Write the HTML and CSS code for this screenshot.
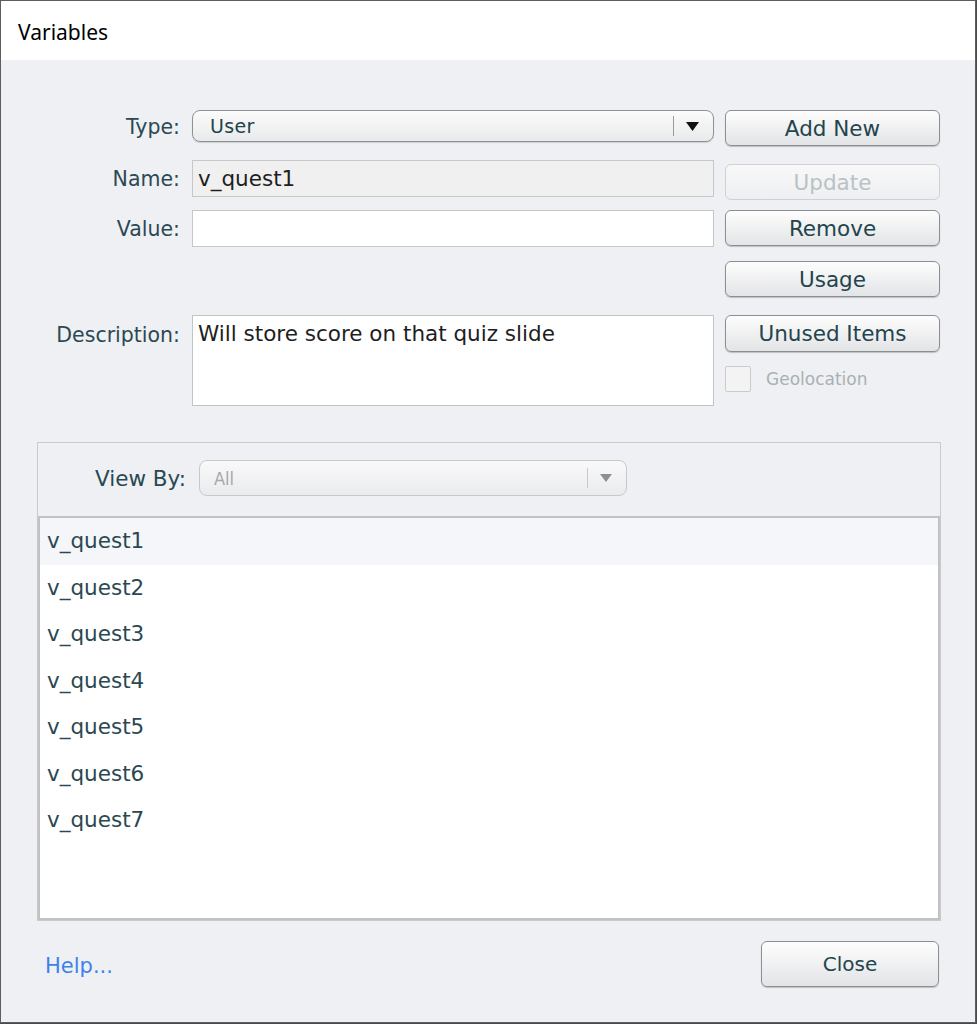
FILE: index.html
```html
<!DOCTYPE html>
<html>
<head>
<meta charset="utf-8">
<title>Variables</title>
<link rel="stylesheet" href="styles.css">
</head>
<body>
<div class="window">
  <div class="titlebar">Variables</div>
  <div class="content">
    <div class="form">
      <div class="label h32">Type:</div>
      <div class="select">
        <span class="select-text">User</span>
        <span class="select-div"></span>
        <svg class="arrow" width="13" height="9" viewBox="0 0 13 9"><path d="M0 0H13L6.5 9Z" fill="#111"/></svg>
      </div>
      <button class="btn">Add New</button>

      <div class="label h37">Name:</div>
      <div class="input readonly">v_quest1</div>
      <button class="btn disabled mt4">Update</button>

      <div class="label h37">Value:</div>
      <div class="input"></div>
      <button class="btn">Remove</button>

      <div class="empty"></div>
      <div class="empty"></div>
      <button class="btn">Usage</button>

      <div class="label h38">Description:</div>
      <div class="textarea">Will store score on that quiz slide</div>
      <div class="side">
        <button class="btn h37">Unused Items</button>
        <label class="check">
          <span class="box"></span>
          <span class="check-text">Geolocation</span>
        </label>
      </div>
    </div>

    <div class="panel">
      <div class="panel-head">
        <div class="vb-label">View By:</div>
        <div class="select dis">
          <span class="select-text all">All</span>
          <span class="select-div light"></span>
          <svg class="arrow" width="12" height="8" viewBox="0 0 12 8"><path d="M0 0H12L6 8Z" fill="#8c9093"/></svg>
        </div>
      </div>
      <div class="list">
        <div class="row sel">v_quest1</div>
        <div class="row">v_quest2</div>
        <div class="row">v_quest3</div>
        <div class="row">v_quest4</div>
        <div class="row">v_quest5</div>
        <div class="row">v_quest6</div>
        <div class="row">v_quest7</div>
      </div>
    </div>

    <div class="footer">
      <a class="help">Help...</a>
      <button class="btn close">Close</button>
    </div>
  </div>
</div>
</body>
</html>
```

FILE: styles.css
```css
html, body {
  margin: 0;
  padding: 0;
  background: #4a4a4a;
}
body {
  width: 977px;
  height: 1024px;
  overflow: hidden;
}
.window {
  width: 974px;
  height: 1021px;
  border: 1px solid #5e5e5e;
  background: #eff0f4;
  display: flex;
  flex-direction: column;
}
.titlebar {
  height: 59px;
  background: #ffffff;
  font-family: "Noto Sans", "Open Sans", sans-serif;
  font-size: 21px;
  color: #000;
  padding-left: 17px;
  line-height: 62px;
  flex: none;
}
.content {
  flex: 1;
  display: flex;
  flex-direction: column;
  font-family: "DejaVu Sans", Verdana, sans-serif;
  color: #2a4851;
}
.form {
  margin-top: 50px;
  padding-left: 39px;
  display: grid;
  grid-template-columns: 152px 533px 215px;
  grid-template-rows: 50px 50px 51px 54px auto;
  align-items: start;
}
.label {
  font-size: 20.5px;
  text-align: right;
  padding-right: 12px;
  display: flex;
  align-items: center;
  justify-content: flex-end;
  color: #2b4952;
}
.h32 { height: 34px; }
.h37 { height: 38px; }
.h38 { height: 40px; }
.select {
  width: 520px;
  height: 30px;
  border: 1px solid #8f9294;
  border-radius: 8px;
  background: linear-gradient(#fbfbfb, #e9eaeb);
  box-shadow: 0 1px 1px rgba(0,0,0,0.15);
  display: flex;
  align-items: center;
  position: relative;
}
.select-text {
  flex: 1;
  padding-left: 17px;
  font-size: 19px;
  color: #22434c;
  letter-spacing: 0.3px;
}
.select-div {
  width: 1px;
  height: 20px;
  background: #9a9a9a;
  margin-right: 12px;
}
.select-div.light { background: #c8c8c8; }
.arrow {
  margin-right: 14px;
}
.btn {
  width: 215px;
  height: 36px;
  border: 1px solid #8c8f91;
  border-radius: 6px;
  background: linear-gradient(#fdfdfd, #e3e4e6);
  box-shadow: 0 1px 1px rgba(0,0,0,0.2);
  font-family: "DejaVu Sans", Verdana, sans-serif;
  font-size: 21.5px;
  color: #24444d;
  padding: 0;
  cursor: default;
}
.btn.h37 { height: 37px; }
.btn.disabled {
  color: #b9c2c5;
  border-color: #cfd1d3;
  box-shadow: none;
  background: linear-gradient(#f8f8f9, #eeeff1);
}
.mt4 { margin-top: 4px; }
.input {
  width: 520px;
  height: 35px;
  border: 1px solid #c6c7c9;
  background: #ffffff;
  font-size: 21.5px;
  color: #1e1e1e;
  box-sizing: content-box;
  display: flex;
  align-items: center;
  padding-left: 0;
}
.input.readonly {
  background: #f0f0f0;
  padding-left: 5px;
  width: 515px;
}
.textarea {
  width: 515px;
  height: 84px;
  border: 1px solid #c2c3c5;
  background: #fff;
  font-size: 21.5px;
  color: #1e1e1e;
  padding: 5px 0 0 5px;
}
.side {
  display: flex;
  flex-direction: column;
}
.check {
  margin-top: 14px;
  display: flex;
  align-items: center;
}
.box {
  width: 24px;
  height: 24px;
  border: 1px solid #c9cbcc;
  background: #f3f3f4;
  border-radius: 2px;
}
.check-text {
  margin-left: 15px;
  font-size: 17px;
  color: #a9b0b3;
}
.panel {
  margin-top: 36px;
  margin-left: 36px;
  width: 902px;
  height: 477px;
  border: 1px solid #c9cacc;
  display: flex;
  flex-direction: column;
}
.panel-head {
  height: 73px;
  box-sizing: border-box;
  padding-top: 17px;
  display: flex;
  align-items: flex-start;
  flex: none;
}
.vb-label {
  width: 148px;
  height: 36px;
  box-sizing: border-box;
  font-size: 21.5px;
  display: flex;
  align-items: center;
  justify-content: flex-end;
  margin-right: 13px;
}
.select.dis {
  width: 426px;
  height: 34px;
  border-color: #c6c8ca;
  box-shadow: none;
  background: linear-gradient(#f9f9fa, #eaebed);
}
.select-text.all {
  font-family: "DejaVu Sans Condensed", "DejaVu Sans", sans-serif;
  font-size: 18px;
  color: #a5a9ab;
  padding-left: 14px;
  letter-spacing: 0;
}
.list {
  flex: 1;
  border: 2px solid #c1c2c4;
  background: #fff;
}
.row {
  height: 46.5px;
  line-height: 46px;
  padding-left: 7px;
  font-size: 21.5px;
  color: #2a4851;
}
.row.sel {
  background: #f5f6f9;
}
.footer {
  flex: 1;
  display: flex;
  justify-content: space-between;
  align-items: flex-start;
  padding: 20px 36px 0 44px;
}
.help {
  font-size: 21px;
  color: #3d82ea;
  margin-top: 13px;
}
.btn.close {
  width: 178px;
  height: 46px;
  font-size: 20px;
}
```
